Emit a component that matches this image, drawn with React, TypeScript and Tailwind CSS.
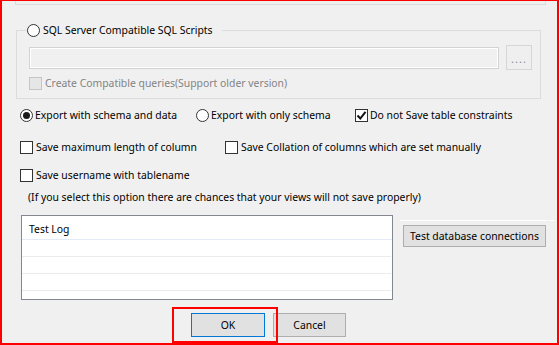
import React from "react";

const font = { fontFamily: '"Noto Sans", "Open Sans", Arial, sans-serif' };

function Radio({ checked }: { checked?: boolean }) {
  return (
    <span className="w-[13px] h-[13px] rounded-full border border-[#333333] bg-white flex items-center justify-center shrink-0">
      {checked && <span className="w-[7px] h-[7px] rounded-full bg-[#1a1a1a]" />}
    </span>
  );
}

function Check({ checked, disabled }: { checked?: boolean; disabled?: boolean }) {
  return (
    <span
      className={
        "w-[13px] h-[13px] border flex items-center justify-center shrink-0 " +
        (disabled ? "border-[#c5c5c5] bg-[#e6e6e6]" : "border-[#333333] bg-white")
      }
    >
      {checked && (
        <svg width="11" height="11" viewBox="0 0 11 11">
          <path d="M1.5 5.5 L4.3 8.5 L9.5 1.8" fill="none" stroke="#111" strokeWidth="2" />
        </svg>
      )}
    </span>
  );
}

export default function App() {
  return (
    <div
      className="relative w-[559px] h-[345px] bg-[#f0f0f0] text-[10.4px] text-black overflow-hidden"
      style={font}
    >
      {/* top group box remnant */}
      <div className="ml-[15px] w-[531px] h-[5px] border-x border-b border-[#dcdcdc]" />

      {/* SQL Server compatible group */}
      <div className="relative mt-[25px] ml-[16px] w-[525px] h-[69px] border border-[#dcdcdc]">
        <div className="absolute left-[10px] top-[-7px] h-[13px] pr-[9px] bg-[#f0f0f0] flex items-center gap-[3px]">
          <Radio />
          <span className="leading-[15px] whitespace-nowrap">SQL Server Compatible SQL Scripts</span>
        </div>
        <div className="flex items-start pl-[12px] pt-[14px]">
          <div className="mt-[2px] w-[470px] h-[22px] border border-[#d3d3d3] shadow-[inset_0_0_0_1px_#ffffff] bg-[#f0f0f0]" />
          <div className="ml-[7px] w-[26px] h-[25px] border border-[#d6d6d6] bg-[#efefef] flex items-center justify-center text-[#8a8a8a] leading-none tracking-[1px]">
            <span className="mt-[2px] text-[11px]">....</span>
          </div>
        </div>
        <div className="flex items-center gap-[3px] pl-[12px] mt-[6px]">
          <Check disabled />
          <span className="text-[#838383] leading-[15px] whitespace-nowrap">
            Create Compatible queries(Support older version)
          </span>
        </div>
      </div>

      {/* export options */}
      <div className="flex items-center mt-[10px] ml-[20px] h-[13px]">
        <div className="w-[176px] flex items-center gap-[2px]">
          <Radio checked />
          <span className="whitespace-nowrap leading-[15px]">Export with schema and data</span>
        </div>
        <div className="w-[159px] flex items-center gap-[2px]">
          <Radio />
          <span className="whitespace-nowrap leading-[15px]">Export with only schema</span>
        </div>
        <div className="flex items-center gap-[2px]">
          <Check checked />
          <span className="whitespace-nowrap leading-[15px]">Do not Save table constraints</span>
        </div>
      </div>

      <div className="flex items-center mt-[19px] ml-[20px] h-[13px]">
        <div className="w-[205px] flex items-center gap-[3px]">
          <Check />
          <span className="whitespace-nowrap leading-[15px]">Save maximum length of column</span>
        </div>
        <div className="flex items-center gap-[3px]">
          <Check />
          <span className="whitespace-nowrap leading-[15px]">Save Collation of columns which are set manually</span>
        </div>
      </div>

      <div className="flex items-center mt-[15px] ml-[20px] h-[13px] gap-[3px]">
        <Check />
        <span className="whitespace-nowrap leading-[15px]">Save username with tablename</span>
      </div>

      <div className="mt-[8px] ml-[28px] h-[15px] leading-[15px] whitespace-nowrap">
        (If you select this option there are chances that your views will not save properly)
      </div>

      {/* log + test button */}
      <div className="flex mt-[10px] ml-[21px]">
        <div className="w-[372px] h-[85px] border border-[#828790] bg-white flex flex-col">
          <div className="h-[24px] border-b border-[#e3ebf7] pl-[7px] pt-[6px] leading-[15px]">Test Log</div>
          <div className="h-[17px] border-b border-[#ececec] mr-[1px]" />
          <div className="h-[17px] border-b border-[#ececec] mr-[1px]" />
          <div className="h-[17px] border-b border-[#ececec] mr-[1px]" />
        </div>
        <div className="ml-[7px] flex flex-col">
          <div className="mt-[5px] flex h-[1px]">
            <div className="w-[147px] bg-white" />
            <div className="ml-[2px] w-[5px] bg-white" />
          </div>
          <div className="mt-[4px] ml-[3px] w-[143px] h-[22px] border border-[#adadad] bg-[#e1e1e1] flex items-center justify-center whitespace-nowrap leading-[15px]">
            Test database connections
          </div>
        </div>
      </div>

      {/* OK / Cancel */}
      <div className="flex mt-[13px] ml-[191px] gap-[8px]">
        <div className="w-[74px] h-[24px] border border-[#0078d7] bg-[#e1e1e1] flex items-center justify-center leading-[15px]">
          OK
        </div>
        <div className="w-[73px] h-[24px] border border-[#adadad] bg-[#e1e1e1] flex items-center justify-center leading-[15px]">
          Cancel
        </div>
      </div>

      {/* annotation overlays */}
      <div className="pointer-events-none absolute left-[172px] top-[307px] w-[106px] h-[36px] border-2 border-[#ff0000]" />
      <div className="pointer-events-none absolute inset-0 border-l-2 border-t border-r-2 border-b-2 border-[#ff0000]" />
    </div>
  );
}
